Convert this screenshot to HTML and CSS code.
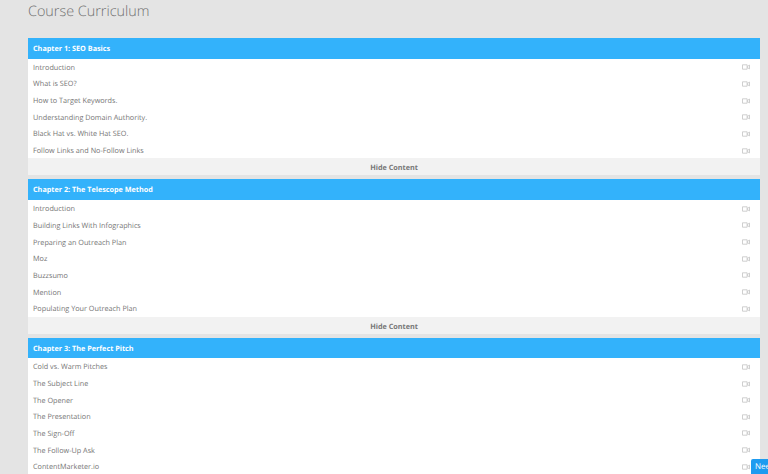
FILE: index.html
```html
<!DOCTYPE html>
<html lang="en">
<head>
<meta charset="utf-8">
<title>Course Curriculum</title>
<link rel="stylesheet" href="styles.css">
</head>
<body>
<svg class="defs" width="0" height="0" aria-hidden="true"><symbol id="cam" viewBox="0 0 8 6"><path d="M.5.8h4.6v4.4H.5zM5.1 2.6 7.5 1.1v3.8L5.1 3.4" fill="none" stroke="#b5b5b5" stroke-width=".8"/></symbol></svg>
<main class="page">
  <h1 class="title">Course Curriculum</h1>
  <section class="chapter">
    <h2 class="chapter-head">Chapter 1: SEO Basics</h2>
    <ul class="lessons">
      <li class="lesson"><span>Introduction</span><svg class="cam"><use href="#cam"/></svg></li>
      <li class="lesson"><span>What is SEO?</span><svg class="cam"><use href="#cam"/></svg></li>
      <li class="lesson"><span>How to Target Keywords.</span><svg class="cam"><use href="#cam"/></svg></li>
      <li class="lesson"><span>Understanding Domain Authority.</span><svg class="cam"><use href="#cam"/></svg></li>
      <li class="lesson"><span>Black Hat vs. White Hat SEO.</span><svg class="cam"><use href="#cam"/></svg></li>
      <li class="lesson"><span>Follow Links and No-Follow Links</span><svg class="cam"><use href="#cam"/></svg></li>
    </ul>
    <div class="toggle">Hide Content</div>
  </section>
  <section class="chapter">
    <h2 class="chapter-head">Chapter 2: The Telescope Method</h2>
    <ul class="lessons">
      <li class="lesson"><span>Introduction</span><svg class="cam"><use href="#cam"/></svg></li>
      <li class="lesson"><span>Building Links With Infographics</span><svg class="cam"><use href="#cam"/></svg></li>
      <li class="lesson"><span>Preparing an Outreach Plan</span><svg class="cam"><use href="#cam"/></svg></li>
      <li class="lesson"><span>Moz</span><svg class="cam"><use href="#cam"/></svg></li>
      <li class="lesson"><span>Buzzsumo</span><svg class="cam"><use href="#cam"/></svg></li>
      <li class="lesson"><span>Mention</span><svg class="cam"><use href="#cam"/></svg></li>
      <li class="lesson"><span>Populating Your Outreach Plan</span><svg class="cam"><use href="#cam"/></svg></li>
    </ul>
    <div class="toggle">Hide Content</div>
  </section>
  <section class="chapter">
    <h2 class="chapter-head">Chapter 3: The Perfect Pitch</h2>
    <ul class="lessons">
      <li class="lesson"><span>Cold vs. Warm Pitches</span><svg class="cam"><use href="#cam"/></svg></li>
      <li class="lesson"><span>The Subject Line</span><svg class="cam"><use href="#cam"/></svg></li>
      <li class="lesson"><span>The Opener</span><svg class="cam"><use href="#cam"/></svg></li>
      <li class="lesson"><span>The Presentation</span><svg class="cam"><use href="#cam"/></svg></li>
      <li class="lesson"><span>The Sign-Off</span><svg class="cam"><use href="#cam"/></svg></li>
      <li class="lesson"><span>The Follow-Up Ask</span><svg class="cam"><use href="#cam"/></svg></li>
      <li class="lesson"><span>ContentMarketer.io</span><svg class="cam"><use href="#cam"/></svg></li>
    </ul>
  </section>
</main>
<div class="help">Nee</div>
</body>
</html>
```
FILE: styles.css
```css
html, body {
  margin: 0;
  height: 100%;
  overflow: hidden;
}
body {
  background: #e4e4e4;
  font-family: "Open Sans", sans-serif;
  color: #757575;
  text-rendering: geometricPrecision;
}
.defs {
  position: absolute;
}
.page {
  padding: 0 8px 0 28px;
}
.title {
  margin: 0;
  height: 38px;
  font-size: 14.4px;
  line-height: 24px;
  font-weight: 300;
  color: #707070;
}
.chapter {
  margin-bottom: 4px;
}
.chapter-head {
  margin: 0;
  height: 20.5px;
  padding-left: 5px;
  background: #33b2fb;
  color: #fff;
  font-size: 7.25px;
  font-weight: 700;
  line-height: 22.5px;
}
.lessons {
  margin: 0;
  padding: 0;
  list-style: none;
  background: #fff;
}
.lesson {
  display: flex;
  align-items: center;
  justify-content: space-between;
  box-sizing: border-box;
  height: 16.67px;
  padding: 2px 10px 0 5px;
  font-size: 7.25px;
}
.cam {
  width: 8px;
  height: 6px;
  opacity: .8;
  margin-bottom: 1px;
}
.toggle {
  height: 17px;
  background: #f2f2f2;
  text-align: center;
  font-size: 7.25px;
  font-weight: 700;
  line-height: 20px;
  color: #777;
}
.help {
  position: fixed;
  right: 0;
  bottom: 0;
  width: 17px;
  height: 15px;
  padding-left: 4px;
  box-sizing: border-box;
  overflow: hidden;
  border-radius: 2px 0 0 0;
  background: #1e9bf0;
  color: #fff;
  font-size: 8px;
  line-height: 15px;
}
```
